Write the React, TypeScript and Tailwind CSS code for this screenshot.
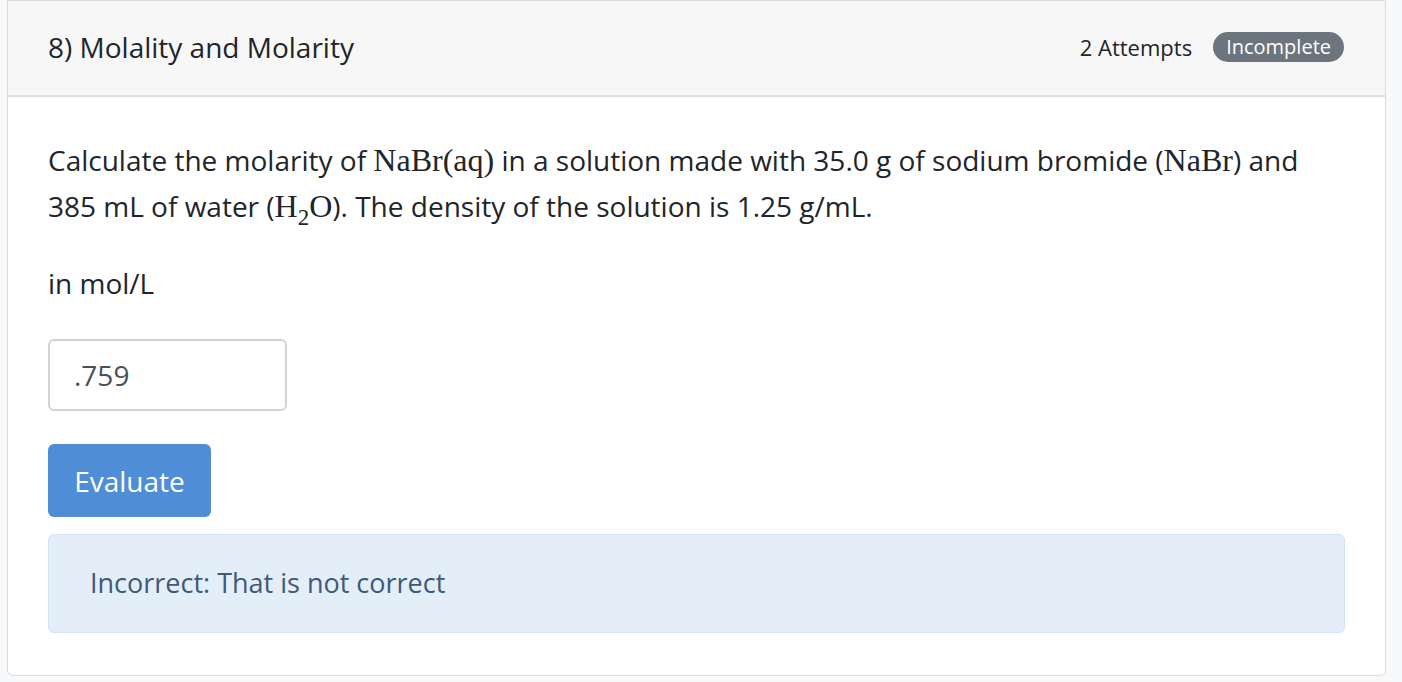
export default function App() {
  const sans = { fontFamily: "'Open Sans', 'Noto Sans', sans-serif" };
  const serif = { fontFamily: "'Liberation Serif', 'DejaVu Serif', serif" };
  return (
    <div className="min-h-[682px] w-[1402px] bg-[#f8f9fb] pl-[7px] pr-[16px] pb-[6px]" style={sans}>
      <div className="bg-white border border-[#dcdcdc] rounded-b-md overflow-hidden">
        {/* Header */}
        <div className="h-[96px] bg-[#f7f7f7] border-b-2 border-[#dedede] flex items-center justify-between pl-[40px] pr-[41px] pb-[2px]">
          <h2 className="text-[28px] text-[#212529]">8) Molality and Molarity</h2>
          <div className="flex items-center gap-[21px]">
            <span className="text-[22px] text-[#212529]">2 Attempts</span>
            <span className="h-[30px] px-[13px] rounded-full bg-[#6c757d] text-white text-[20px] flex items-center">Incomplete</span>
          </div>
        </div>
        {/* Body */}
        <div className="px-[40px] pt-[40px] pb-[42px]">
          <p className="text-[28px] leading-[46px] text-[#212529]">
            Calculate the molarity of{" "}
            <span style={serif} className="text-[32px] leading-none">NaBr(aq)</span>{" "}
            in a solution made with 35.0 g of sodium bromide (
            <span style={serif} className="text-[32px] leading-none">NaBr</span>) and
            <br />
            385 mL of water (
            <span style={serif} className="text-[32px] leading-none">
              H<span className="text-[23px] leading-none relative top-[8px]">2</span>O
            </span>
            ). The density of the solution is 1.25 g/mL.
          </p>
          <p className="mt-[31px] text-[28px] leading-[46px] text-[#212529]">in mol/L</p>
          <div className="mt-[33px] w-[239px] h-[72px] border-2 border-[#d0d4d8] rounded-md flex items-center pl-[24px] text-[28px] text-[#495057]">
            .759
          </div>
          <button className="mt-[33px] w-[163px] h-[73px] rounded-md bg-[#4f8ed6] text-white text-[28px] flex items-center justify-center" style={sans}>
            Evaluate
          </button>
          <div className="mt-[17px] h-[99px] rounded-md bg-[#e3eef9] border border-[#d3e3f4] flex items-center pl-[41px] text-[27px] text-[#3d5a78]">
            Incorrect: That is not correct
          </div>
        </div>
      </div>
    </div>
  );
}
